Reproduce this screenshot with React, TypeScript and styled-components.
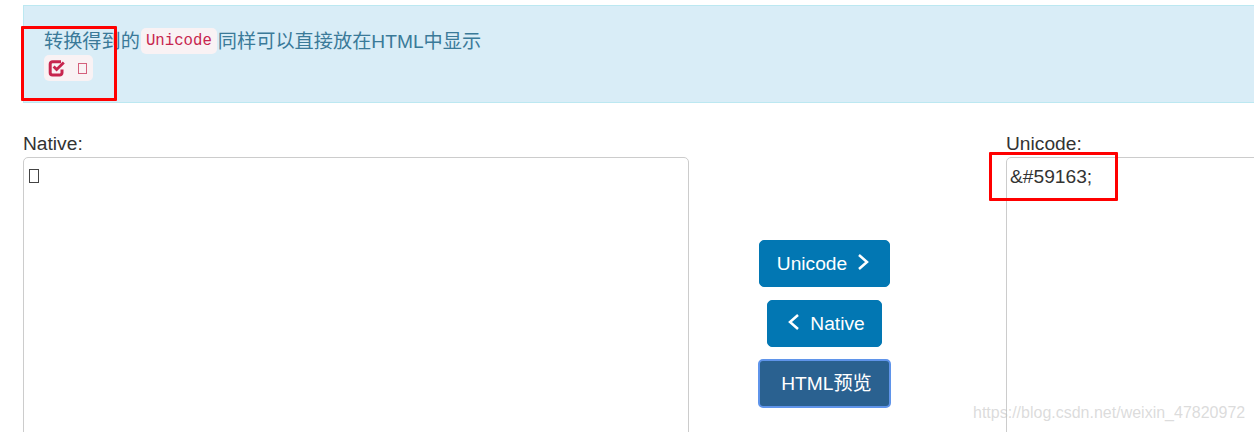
import React from 'react';
import styled, { createGlobalStyle } from 'styled-components';

const GlobalStyle = createGlobalStyle`
    html, body {
        margin: 0;
        padding: 0;
        background: #fff;
    }
    body {
        font-family: "Liberation Sans", "Noto Sans CJK SC", sans-serif;
        font-size: 19.2px;
        line-height: 27.4px;
        color: #333;
    }
`;

const Page = styled.div`
    position: relative;
    width: 1254px;
    height: 432px;
    overflow: hidden;
    padding: 5px 0 0 23px;
    box-sizing: border-box;
`;

const Alert = styled.div`
    width: 1260px;
    height: 98px;
    box-sizing: border-box;
    padding: 22px 20px 0;
    background: #d9edf7;
    border: 1px solid #bce8f1;
    color: #3a7a99;
`;

const Line = styled.div`
    height: 27.4px;
    white-space: nowrap;
`;

const Code = styled.code`
    display: inline-block;
    height: 26px;
    line-height: 26px;
    padding: 0 5px;
    margin: 0 1px;
    border-radius: 5px;
    background: #f9f2f4;
    color: #c7254e;
    font-family: "Liberation Mono", monospace;
    font-size: 15.7px;
    vertical-align: top;
`;

const IconCode = styled(Code)`
    display: inline-flex;
    align-items: center;
    gap: 12px;
    margin: 0;
    width: 49px;
    box-sizing: border-box;
    padding: 0 4px;
`;

const Tofu = styled.span<{ $w: number; $h: number; $color: string; $ml?: number }>`
    display: inline-block;
    box-sizing: border-box;
    width: ${(props) => props.$w}px;
    height: ${(props) => props.$h}px;
    margin-left: ${(props) => props.$ml ?? 0}px;
    border: 1px solid ${(props) => props.$color};
`;

const Converter = styled.div`
    display: grid;
    grid-template-columns: 666px 317px 300px;
    margin-top: 27px;
`;

const Column = styled.div`
    display: flex;
    flex-direction: column;
`;

const Label = styled.label`
    display: block;
    height: 27px;
    line-height: 27px;
`;

const TextBox = styled.div`
    height: 400px;
    box-sizing: border-box;
    padding: 5px 3px;
    background: #fff;
    border: 1px solid #ccc;
    border-radius: 5px;
    font-size: 19.2px;
    line-height: 27px;
`;

const ButtonStack = styled.div`
    display: flex;
    flex-direction: column;
    align-items: center;
    width: 271px;
    padding-top: 110px;
`;

const Button = styled.button<{
    $active?: boolean;
    $w: number;
    $h: number;
    $mt: number;
    $pad?: string;
}>`
    display: flex;
    align-items: center;
    justify-content: center;
    gap: 10px;
    width: ${(props) => props.$w}px;
    height: ${(props) => props.$h}px;
    margin-top: ${(props) => props.$mt}px;
    padding: ${(props) => props.$pad ?? '0'};
    color: #fff;
    font-family: inherit;
    font-size: 19.2px;
    background: ${(props) => (props.$active ? '#2a6190' : '#0277b3')};
    border: ${(props) => (props.$active ? '2px solid #5f94ea' : '1px solid #0277b3')};
    border-radius: 5px;
`;

const Mark = styled.div<{ $left: number; $top: number; $w: number; $h: number }>`
    position: absolute;
    left: ${(props) => props.$left}px;
    top: ${(props) => props.$top}px;
    width: ${(props) => props.$w}px;
    height: ${(props) => props.$h}px;
    box-sizing: border-box;
    border: 3px solid #f00;
    border-radius: 1px;
`;

const Watermark = styled.div`
    position: absolute;
    left: 973px;
    top: 403px;
    font-size: 16px;
    line-height: 20px;
    color: rgba(190, 190, 190, 0.55);
    white-space: nowrap;
`;

const ChevronIcon = styled.svg`
    margin-top: -4px;
`;

const CheckSquare = () => (
    <svg width="18" height="18" viewBox="0 0 18 18" fill="none">
        <path
            d="M14 10.5v3.2a2.3 2.3 0 0 1-2.3 2.3H4.5a2.3 2.3 0 0 1-2.3-2.3V5a2.3 2.3 0 0 1 2.3-2.3h8.5"
            stroke="#c7254e"
            strokeWidth="3"
        />
        <path d="M5.6 7.6 8.6 10.6 15.8 3.6" stroke="#c7254e" strokeWidth="2.8" />
    </svg>
);

const Chevron = ({ left }: { left?: boolean }) => (
    <ChevronIcon width="13" height="16" viewBox="0 0 13 16" fill="none">
        <path
            d={left ? 'M11 1 3 8l8 7' : 'M2 1l8 7-8 7'}
            stroke="#fff"
            strokeWidth="2.5"
        />
    </ChevronIcon>
);

const App: React.FC = () => (
    <Page>
        <GlobalStyle />
        <Alert>
            <Line>
                转换得到的<Code>Unicode</Code>同样可以直接放在HTML中显示
            </Line>
            <Line>
                <IconCode>
                    <CheckSquare />
                    <Tofu $w={9} $h={11} $color="#d4607c" />
                </IconCode>
            </Line>
        </Alert>
        <Converter>
            <Column>
                <Label>Native:</Label>
                <TextBox>
                    <Tofu $w={10} $h={14} $color="#444" $ml={2} />
                </TextBox>
            </Column>
            <ButtonStack>
                <Button $w={131} $h={47} $mt={0} $pad="0 2px 0 0">
                    Unicode
                    <Chevron />
                </Button>
                <Button $w={115} $h={47} $mt={13} $pad="0 0 0 3px">
                    <Chevron left />
                    Native
                </Button>
                <Button $active $w={133} $h={49} $mt={12} $pad="0 0 3px 4px">
                    HTML预览
                </Button>
            </ButtonStack>
            <Column>
                <Label>Unicode:</Label>
                <TextBox>&amp;#59163;</TextBox>
            </Column>
        </Converter>
        <Mark $left={21} $top={26} $w={96} $h={75} />
        <Mark $left={989} $top={152} $w={129} $h={49} />
        <Watermark>https://blog.csdn.net/weixin_47820972</Watermark>
    </Page>
);

export default App;
